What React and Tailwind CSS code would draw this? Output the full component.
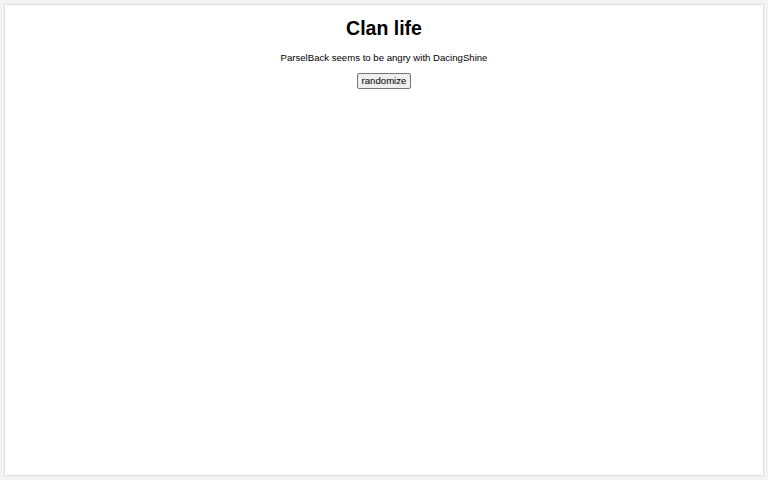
import React, { useState } from 'react';

const names = ['ParselBack', 'DacingShine', 'MossTail', 'EmberClaw', 'SilverLeaf'];
const moods = ['angry with', 'friends with', 'jealous of', 'in love with'];

const App = () => {
  const [line, setLine] = useState('ParselBack seems to be angry with DacingShine');

  const randomize = () => {
    const a = names[Math.floor(Math.random() * names.length)];
    let b = names[Math.floor(Math.random() * names.length)];
    if (b === a) b = names[(names.indexOf(a) + 1) % names.length];
    const m = moods[Math.floor(Math.random() * moods.length)];
    setLine(`${a} seems to be ${m} ${b}`);
  };

  return (
    <div className="w-[768px] h-[480px] bg-[#f2f2f2] p-[4px] font-['Liberation_Sans',Arial,sans-serif] text-black">
      <div className="h-[472px] bg-white border border-[#dcdcdc] flex flex-col items-center pt-[11px]">
        <h1 className="text-[19.5px] leading-[24px] font-bold">Clan life</h1>
        <p className="mt-[12px] text-[9.6px] leading-[12px]">{line}</p>
        <button
          onClick={randomize}
          className="mt-[9px] h-[16px] px-[4px] text-[9.6px] leading-[12px] bg-[#efefef] border border-[#767676] rounded-[2px]"
        >
          randomize
        </button>
      </div>
    </div>
  );
};

export default App;
